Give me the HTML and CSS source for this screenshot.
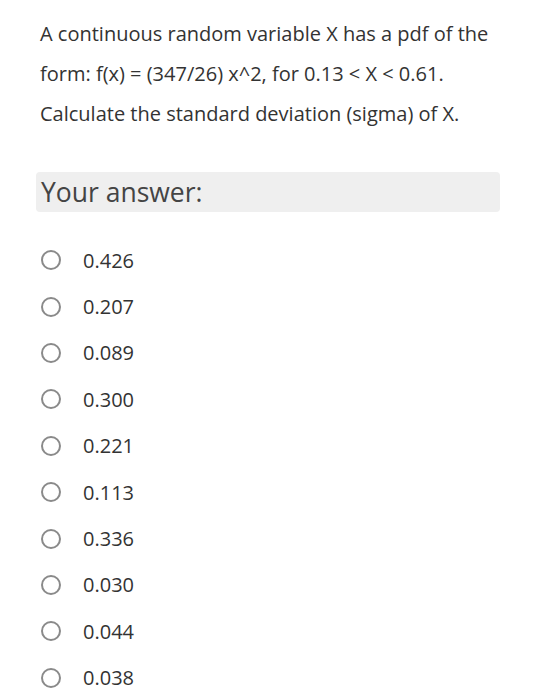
FILE: index.html
```html
<!DOCTYPE html>
<html>
<head>
<meta charset="utf-8">
<link rel="stylesheet" href="styles.css">
</head>
<body>
<div class="page">
  <div class="question">
    <p>A continuous random variable X has a pdf of the form: f(x) = (347/26) x^2, for 0.13 &lt; X &lt; 0.61.</p>
    <p>Calculate the standard deviation (sigma) of X.</p>
  </div>
  <div class="answer-label">Your answer:</div>
  <ul class="options">
    <li><span class="radio"></span><span class="val">0.426</span></li>
    <li><span class="radio"></span><span class="val">0.207</span></li>
    <li><span class="radio"></span><span class="val">0.089</span></li>
    <li><span class="radio"></span><span class="val">0.300</span></li>
    <li><span class="radio"></span><span class="val">0.221</span></li>
    <li><span class="radio"></span><span class="val">0.113</span></li>
    <li><span class="radio"></span><span class="val">0.336</span></li>
    <li><span class="radio"></span><span class="val">0.030</span></li>
    <li><span class="radio"></span><span class="val">0.044</span></li>
    <li><span class="radio"></span><span class="val">0.038</span></li>
  </ul>
</div>
</body>
</html>
```
FILE: styles.css
```css
html, body {
  margin: 0;
  padding: 0;
  background: #fff;
}
body {
  font-family: "Open Sans", "DejaVu Sans", sans-serif;
  color: #333;
}
.page {
  padding: 14px 36px 0 36px;
}
.question {
  padding: 0 4px;
}
.question p {
  margin: 0;
  font-size: 20px;
  line-height: 40px;
}
.answer-label {
  margin-top: 38px;
  background: #efefef;
  border-radius: 4px;
  height: 40px;
  line-height: 40px;
  font-size: 26.5px;
  padding-left: 5px;
  color: #444;
}
.options {
  list-style: none;
  margin: 25px 0 0 0;
  padding: 0;
}
.options li {
  display: flex;
  align-items: center;
  height: 46.4px;
}
.radio {
  box-sizing: border-box;
  width: 20px;
  height: 20px;
  border: 2px solid #8a8a8a;
  border-radius: 50%;
  margin-left: 5px;
}
.val {
  margin-left: 22px;
  font-size: 20px;
}
```
